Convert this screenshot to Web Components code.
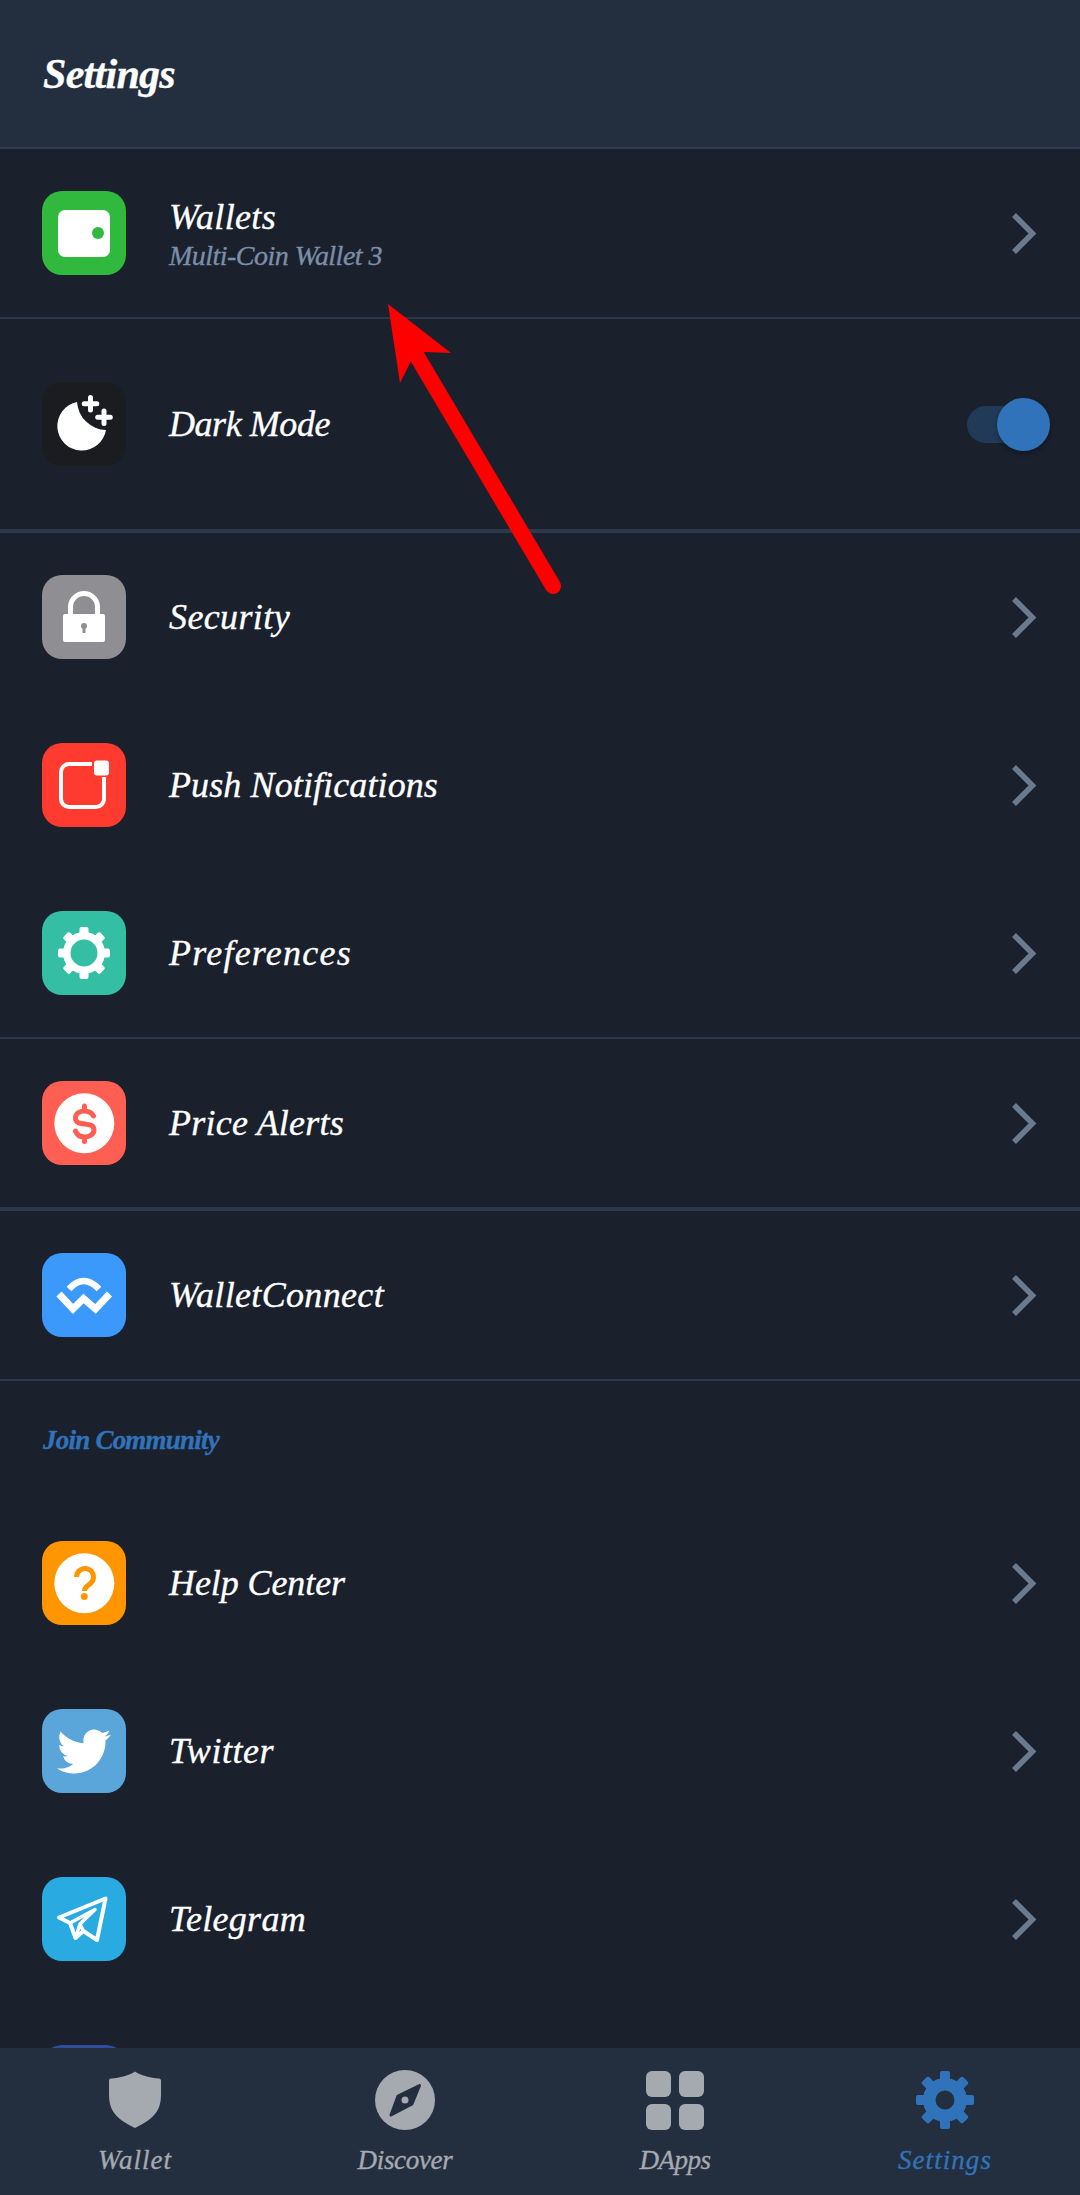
<!DOCTYPE html>
<html>
<head>
<meta charset="utf-8">
<title>Settings</title>
<style>
    html, body { margin: 0; padding: 0; background: #1a212d; }
    body { font-family: "Liberation Serif", serif; font-style: italic; color: #fff; -webkit-text-stroke: .35px; }
</style>
</head>
<body>
<settings-app>
    <settings-header title="Settings" w="132" slot="header"></settings-header>

    <setting-row title="Wallets" w="107" sub="Multi-Coin Wallet 3" sw="213" icon="wallet"></setting-row>
    <list-line></list-line>
    <setting-row title="Dark Mode" w="161" icon="moon" tall><setting-toggle></setting-toggle></setting-row>
    <list-line thick></list-line>
    <setting-row title="Security" w="121" icon="lock"></setting-row>
    <setting-row title="Push Notifications" w="269" icon="push"></setting-row>
    <setting-row title="Preferences" w="183" icon="prefs"></setting-row>
    <list-line></list-line>
    <setting-row title="Price Alerts" w="175" icon="price"></setting-row>
    <list-line thick></list-line>
    <setting-row title="WalletConnect" w="215" icon="wc"></setting-row>
    <list-line></list-line>
    <section-label w="176">Join Community</section-label>
    <setting-row title="Help Center" w="176" icon="help"></setting-row>
    <setting-row title="Twitter" w="105" icon="twitter"></setting-row>
    <setting-row title="Telegram" w="137" icon="telegram"></setting-row>
    <setting-row icon="blank"></setting-row>

    <tab-bar slot="footer">
        <tab-item label="Wallet" w="74" icon="shield"></tab-item>
        <tab-item label="Discover" w="95" icon="compass"></tab-item>
        <tab-item label="DApps" w="71" icon="grid"></tab-item>
        <tab-item label="Settings" w="94" icon="cog" active></tab-item>
    </tab-bar>
    <red-arrow slot="overlay"></red-arrow>
</settings-app>

<script>
// the app's hand-drawn font is not available, so stretch each text to its real width
function fitWidth(el, width) {
    if (!width) return;
    const r = document.createRange();
    r.selectNodeContents(el);
    const extra = Number(width) - r.getBoundingClientRect().width;
    el.style.letterSpacing = (extra / el.textContent.trim().length).toFixed(3) + "px";
}

// teeth + ring, the middle stays see-through
function gear(cx, cy, ring, width, toothTip, toothW, color) {
    let teeth = "";
    for (let i = 0; i < 8; i++) {
        teeth += `<rect x="${cx - toothW / 2}" y="${cy - toothTip}" width="${toothW}" height="${toothTip - ring}" rx="2" fill="${color}" transform="rotate(${i * 45} ${cx} ${cy})"/>`;
    }
    return `${teeth}<circle cx="${cx}" cy="${cy}" r="${ring}" fill="none" stroke="${color}" stroke-width="${width}"/>`;
}

const ICONS = {
    wallet: { bg: "#31b93d", art: `<rect x="16" y="19" width="52" height="47" rx="7" fill="#fff"/><circle cx="56" cy="42" r="6" fill="#31b93d"/>` },
    moon: { bg: "#1b1c1f", art: `<path d="M35 20A24.500 24.500 0 1 0 64 48A30 30 0 0 1 35 20Z" fill="#fff"/><path d="M48.500 15.500V28M42.200 21.700H54.800M62 29V41.500M55.700 35.200H68.300" stroke="#fff" stroke-width="5" stroke-linecap="round" fill="none"/>` },
    lock: { bg: "#8e8e93", art: `<path d="M28.500 40V32a13.500 13.500 0 0 1 27 0V40" fill="none" stroke="#fff" stroke-width="5"/><rect x="21" y="39" width="42" height="28" rx="2" fill="#fff"/><circle cx="42" cy="51" r="3" fill="#8e8e93"/><rect x="40.500" y="51" width="3" height="7" fill="#8e8e93"/>` },
    push: { bg: "#ff3b2f", art: `<rect x="19" y="21" width="43" height="43" rx="8" fill="none" stroke="#fff" stroke-width="4"/><rect x="50" y="15" width="19" height="19" rx="4" fill="#ff3b2f"/><rect x="52" y="17.500" width="15" height="15" rx="3" fill="#fff"/>` },
    prefs: { bg: "#34bfa5", art: gear(42, 42, 17.250, 7.500, 26, 9, "#fff") },
    price: { bg: "#ff5f52", art: `<circle cx="42.300" cy="42.300" r="30" fill="#fff"/><path d="M51.500 35C49.500 31.500 46.500 30 42.500 30C37 30 33.500 33 33.500 37C33.500 47 52 39 52 49C52 53 48 56 42.500 56C38 56 35 54 33.500 50M42.500 25V30M42.500 56V60.500" fill="none" stroke="#ff5f52" stroke-width="5" stroke-linecap="round"/>` },
    wc: { bg: "#3b99fc", art: `<path d="M27 36Q41.500 20 57 36" fill="none" stroke="#fff" stroke-width="6.500"/><path d="M17 41L31 56L41.500 45.500L53.500 56L67.500 41" fill="none" stroke="#fff" stroke-width="7"/>` },
    help: { bg: "#ff9500", art: `<circle cx="42.300" cy="42.300" r="30" fill="#fff"/><path d="M34.500 36a8.500 8.500 0 1 1 14 6.500c-3 2.500-6 3.500-6 7.500" fill="none" stroke="#ff9500" stroke-width="5"/><circle cx="42.300" cy="55.500" r="3.500" fill="#ff9500"/>` },
    twitter: { bg: "#5aa5da", art: `<g transform="translate(15 15.500) scale(2.250)"><path fill="#fff" d="M23.953 4.570a10 10 0 01-2.825.775 4.958 4.958 0 002.163-2.723c-.951.555-2.005.959-3.127 1.184a4.920 4.920 0 00-8.384 4.482C7.690 8.095 4.067 6.130 1.640 3.162a4.822 4.822 0 00-.666 2.475c0 1.710.870 3.213 2.188 4.096a4.904 4.904 0 01-2.228-.616v.060a4.923 4.923 0 003.946 4.827 4.996 4.996 0 01-2.212.085 4.936 4.936 0 004.604 3.417 9.867 9.867 0 01-6.102 2.105c-.390 0-.779-.023-1.170-.067a13.995 13.995 0 007.557 2.209c9.053 0 13.998-7.496 13.998-13.985 0-.210 0-.420-.015-.630A9.935 9.935 0 0024 4.590z"/></g>` },
    telegram: { bg: "#29abe2", art: `<path d="M17 40.500L63.500 21.500L55 63L41.300 54L33.500 61L28 46Z" fill="none" stroke="#fff" stroke-width="4" stroke-linejoin="round"/><path d="M28 46L53 32.500L38 47L33.500 61M38 47L41.300 54" fill="none" stroke="#fff" stroke-width="3.500" stroke-linejoin="round"/>` },
    blank: { bg: "#2f4f9e", art: "" }
};

const TAB_ICONS = {
    shield: `<path fill="currentColor" d="M30 1.500C36 5.500 45 8 54 8.500C55.500 8.600 56 9.500 56 11V25C56 43 46 50 30 58C14 50 4 43 4 25V11C4 9.500 4.500 8.600 6 8.500C15 8 24 5.500 30 1.500Z"/>`,
    compass: `<circle cx="30" cy="30" r="30" fill="currentColor"/><path d="M44.500 15.500L37 34L16 45L23 26Z" fill="#232f3e" stroke="#232f3e" stroke-width="3" stroke-linejoin="round"/><circle cx="30" cy="30" r="3.500" fill="currentColor"/>`,
    grid: `<rect x="1" y="1" width="25" height="26" rx="6" fill="currentColor"/><rect x="34" y="1" width="25" height="26" rx="6" fill="currentColor"/><rect x="1" y="34" width="25" height="26" rx="6" fill="currentColor"/><rect x="34" y="34" width="25" height="26" rx="6" fill="currentColor"/>`,
    cog: gear(30, 30, 15.750, 12.500, 29, 10, "currentColor")
};

class SettingsApp extends HTMLElement {
    connectedCallback() {
        const shadow = this.attachShadow({ mode: "open" });
        shadow.innerHTML = `
            <style>
                :host { display: flex; flex-direction: column; position: relative; height: 2195px; overflow: hidden; background: #1a212d; }
                .list { flex: 1; min-height: 0; overflow: hidden; }
            </style>
            <slot name="header"></slot>
            <div class="list"><slot></slot></div>
            <slot name="footer"></slot>
            <slot name="overlay"></slot>
        `;
    }
}

class SettingsHeader extends HTMLElement {
    connectedCallback() {
        const shadow = this.attachShadow({ mode: "open" });
        shadow.innerHTML = `
            <style>
                :host { display: flex; align-items: center; height: 147px; padding-left: 43px; background: #232f3e; border-bottom: 2px solid #2f3d50; font-size: 42px; font-weight: 700; }
            </style>
            <div class="t">${this.getAttribute("title")}</div>
        `;
        fitWidth(shadow.querySelector(".t"), this.getAttribute("w"));
    }
}

class ListLine extends HTMLElement {
    connectedCallback() {
        const shadow = this.attachShadow({ mode: "open" });
        const h = this.hasAttribute("thick") ? 4 : 2;
        shadow.innerHTML = `<style>:host { display: block; height: ${h}px; background: #2c394c; }</style>`;
    }
}

class AppIcon extends HTMLElement {
    connectedCallback() {
        const shadow = this.attachShadow({ mode: "open" });
        const icon = ICONS[this.getAttribute("name")];
        shadow.innerHTML = `
            <style>
                :host { display: block; flex: none; width: 84px; height: 84px; border-radius: 20px; background: ${icon.bg}; }
                svg { display: block; }
            </style>
            <svg width="84" height="84" viewBox="0 0 84 84">${icon.art}</svg>
        `;
    }
}

class SettingRow extends HTMLElement {
    connectedCallback() {
        const shadow = this.attachShadow({ mode: "open" });
        const title = this.getAttribute("title");
        const sub = this.getAttribute("sub");
        shadow.innerHTML = `
            <style>
                :host { display: flex; align-items: center; height: ${this.hasAttribute("tall") ? 210 : 168}px; padding: 0 43px 0 42px; }
                .text { flex: 1; margin-left: 43px; padding-top: ${sub ? 2 : 0}px; }
                .title { font-size: 36px; line-height: 40px; }
                .sub { font-size: 28px; line-height: 30px; margin-top: 4px; color: #7c8ea8; }
                .chev { display: block; }
                ::slotted(setting-toggle) { margin-right: -13px; }
            </style>
            <app-icon name="${this.getAttribute("icon")}"></app-icon>
            <div class="text">
                ${title ? `<div class="title">${title}</div>` : ""}
                ${sub ? `<div class="sub">${sub}</div>` : ""}
            </div>
            <slot>
                <svg class="chev" width="25" height="41" viewBox="0 0 25 41"><path d="M2 2L20.500 20.500L2 39" fill="none" stroke="#6b7b8f" stroke-width="5.500"/></svg>
            </slot>
        `;
        if (title) fitWidth(shadow.querySelector(".title"), this.getAttribute("w"));
        if (sub) fitWidth(shadow.querySelector(".sub"), this.getAttribute("sw"));
    }
}

class SettingToggle extends HTMLElement {
    connectedCallback() {
        const shadow = this.attachShadow({ mode: "open" });
        shadow.innerHTML = `
            <style>
                :host { display: block; position: relative; width: 83px; height: 37px; border-radius: 19px; background: #213a58; }
                .knob { position: absolute; right: 0; top: -8px; width: 53px; height: 53px; border-radius: 50%; background: #3173bb; box-shadow: 0 2px 5px rgba(0,0,0,.35); }
            </style>
            <div class="knob"></div>
        `;
    }
}

class SectionLabel extends HTMLElement {
    connectedCallback() {
        const shadow = this.attachShadow({ mode: "open" });
        shadow.innerHTML = `
            <style>
                :host { display: flex; align-items: center; height: 118px; padding-left: 43px; box-sizing: border-box; color: #3173bb; font-size: 27px; font-weight: 700; }
            </style>
            <div class="t">${this.textContent}</div>
        `;
        fitWidth(shadow.querySelector(".t"), this.getAttribute("w"));
    }
}

class TabBar extends HTMLElement {
    connectedCallback() {
        const shadow = this.attachShadow({ mode: "open" });
        shadow.innerHTML = `
            <style>
                :host { display: grid; grid-template-columns: repeat(4, 1fr); height: 147px; background: #232f3e; }
            </style>
            <slot></slot>
        `;
    }
}

class TabItem extends HTMLElement {
    connectedCallback() {
        const shadow = this.attachShadow({ mode: "open" });
        shadow.innerHTML = `
            <style>
                :host { display: flex; flex-direction: column; align-items: center; padding-top: 22px; color: ${this.hasAttribute("active") ? "#3173bb" : "#a5a9b0"}; }
                svg { display: block; }
                .label { font-size: 27px; line-height: 30px; margin-top: 14px; }
            </style>
            <svg width="60" height="61" viewBox="0 0 60 61">${TAB_ICONS[this.getAttribute("icon")]}</svg>
            <div class="label">${this.getAttribute("label")}</div>
        `;
        fitWidth(shadow.querySelector(".label"), this.getAttribute("w"));
    }
}

// annotation painted on top of the screenshot
class RedArrow extends HTMLElement {
    connectedCallback() {
        const shadow = this.attachShadow({ mode: "open" });
        shadow.innerHTML = `
            <style>
                :host { position: absolute; left: 0; top: 0; width: 1080px; height: 700px; pointer-events: none; }
            </style>
            <svg width="1080" height="700" viewBox="0 0 1080 700">
                <path d="M418 358L553 586" fill="none" stroke="#f00" stroke-width="16" stroke-linecap="round"/>
                <path d="M388 304L451 353L425 352L411.500 360L400 383Z" fill="#f00"/>
            </svg>
        `;
    }
}

customElements.define("settings-app", SettingsApp);
customElements.define("settings-header", SettingsHeader);
customElements.define("list-line", ListLine);
customElements.define("app-icon", AppIcon);
customElements.define("setting-row", SettingRow);
customElements.define("setting-toggle", SettingToggle);
customElements.define("section-label", SectionLabel);
customElements.define("tab-bar", TabBar);
customElements.define("tab-item", TabItem);
customElements.define("red-arrow", RedArrow);
</script>
</body>
</html>
